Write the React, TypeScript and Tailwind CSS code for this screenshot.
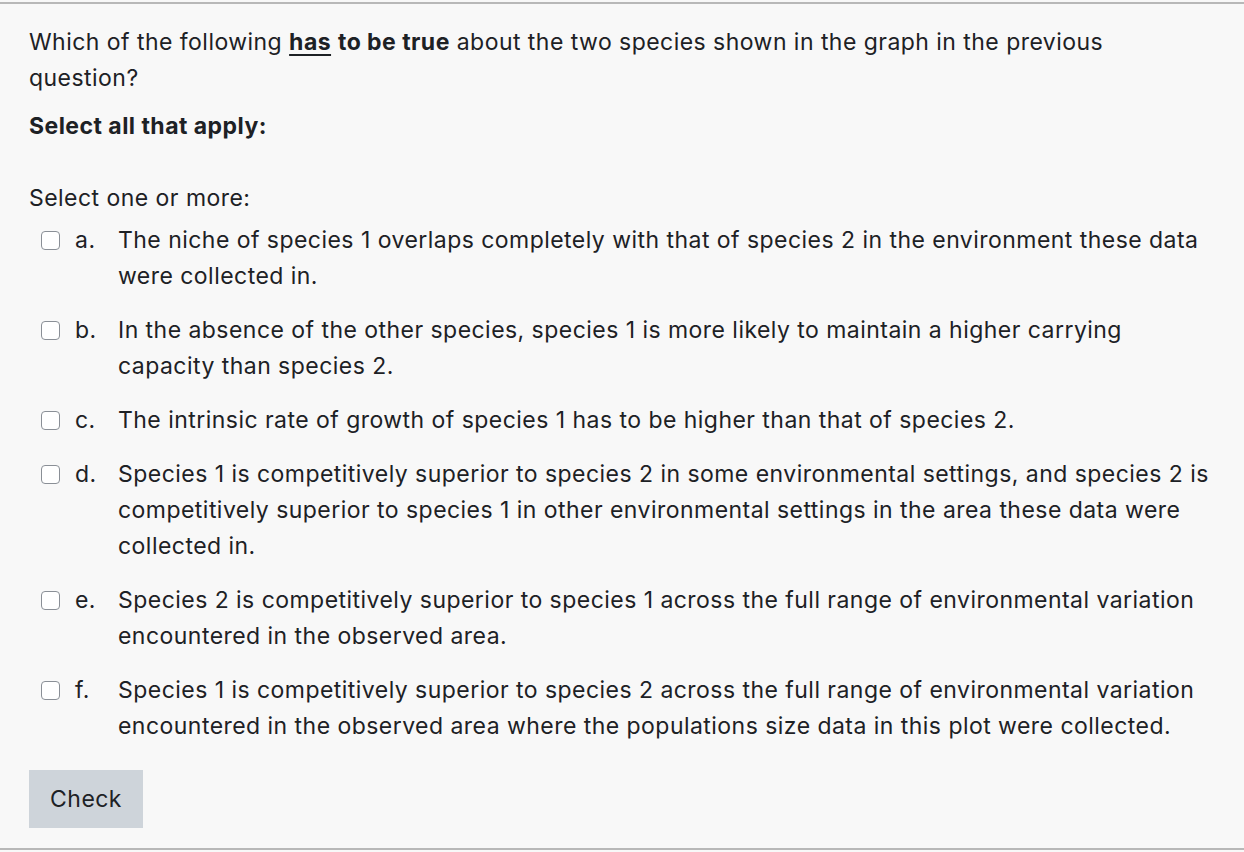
import React from "react";

const options: { l: string; t: string }[] = [
  { l: "a.", t: "The niche of species 1 overlaps completely with that of species 2 in the environment these data were collected in." },
  { l: "b.", t: "In the absence of the other species, species 1 is more likely to maintain a higher carrying capacity than species 2." },
  { l: "c.", t: "The intrinsic rate of growth of species 1 has to be higher than that of species 2." },
  { l: "d.", t: "Species 1 is competitively superior to species 2 in some environmental settings, and species 2 is competitively superior to species 1 in other environmental settings in the area these data were collected in." },
  { l: "e.", t: "Species 2 is competitively superior to species 1 across the full range of environmental variation encountered in the observed area." },
  { l: "f.", t: "Species 1 is competitively superior to species 2 across the full range of environmental variation encountered in the observed area where the populations size data in this plot were collected." },
];

export default function App() {
  return (
    <div
      className="w-[1244px] h-[852px] bg-[#f8f8f8] text-[#1d2125] text-[23px] leading-[36px] tracking-[0.02em] overflow-hidden"
      style={{ fontFamily: "Inter, 'Noto Sans', sans-serif" }}
    >
      <div className="mt-[2px] h-[848px] border-t-2 border-b-2 border-[#b8b8b8] pl-[29px] pr-[28px] pt-[20px]">
        <p className="pr-[90px]">
          Which of the following <b className="underline underline-offset-[4px] decoration-2">has</b>{" "}
          <b>to be true</b> about the two species shown in the graph in the previous question?
        </p>
        <p className="mt-[12px] font-bold">Select all that apply:</p>
        <p className="mt-[36px]">Select one or more:</p>
        <div className="mt-[6px] flex flex-col gap-[18px]">
          {options.map((o) => (
            <div key={o.l} className="flex items-start">
              <div className="w-[89px] shrink-0 flex items-center h-[36px]">
                <span className="ml-[12px] w-[19px] h-[19px] rounded-[4px] border-[1.5px] border-[#8a8f96] bg-white" />
                <span className="ml-[15px]">{o.l}</span>
              </div>
              <div className="flex-1">{o.t}</div>
            </div>
          ))}
        </div>
        <button className="mt-[26px] w-[114px] h-[58px] bg-[#ced4da] text-[#1d2125] text-[23px] tracking-[0.02em]">Check</button>
      </div>
    </div>
  );
}
